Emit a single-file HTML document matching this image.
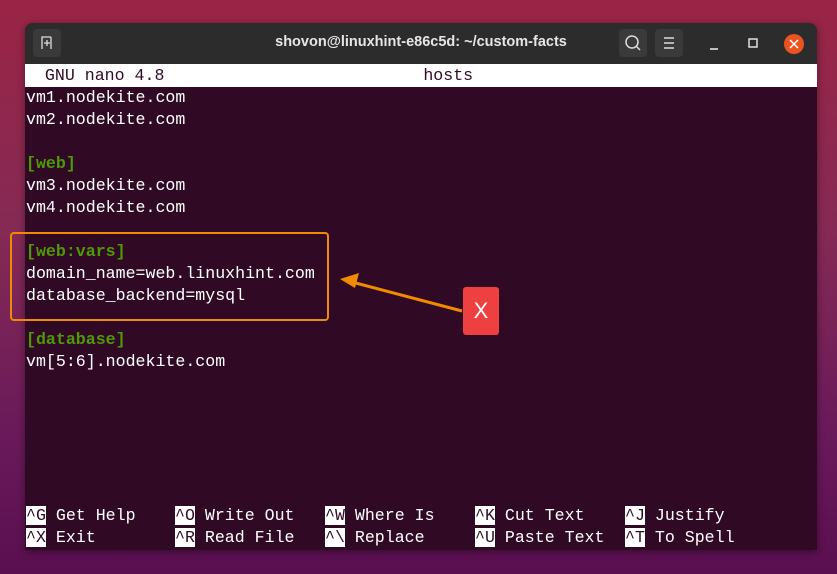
<!DOCTYPE html>
<html><head><style>
html,body{margin:0;padding:0}
body{width:837px;height:574px;overflow:hidden;position:relative;
background:linear-gradient(180deg,#9a2445 0%,#852a55 40%,#6a1a5a 75%,#5a0f50 100%);
font-family:"Liberation Mono",monospace;}
.win{position:absolute;left:25px;top:23px;width:792px;height:527px;background:#300a24;border-radius:8px 8px 0 0;overflow:hidden;box-shadow:0 2px 8px rgba(0,0,0,.4)}
.tb{position:absolute;left:0;top:0;width:792px;height:41px;background:#2c2c2c}
.title{position:absolute;left:0;width:792px;top:11px;text-align:center;color:#e6e6e6;font:bold 14.5px "Liberation Sans",sans-serif}
.btn{position:absolute;top:6px;width:28px;height:28px;background:#3a3a3a;border-radius:4px}
.hdr{position:absolute;left:0;top:41px;width:792px;height:23px;background:#fff;color:#300a24;font-size:16.6px;line-height:23px;white-space:pre}
.t{position:absolute;left:1px;color:#fff;font-size:16.6px;line-height:22px;white-space:pre}
.g{color:#4e9a06;font-weight:bold}
.k{background:#fff;color:#300a24}
</style></head><body>
<div class="win">
 <div class="tb">
  <div class="btn" style="left:8px"><svg width="28" height="28"><path d="M9 20V8h9M14 11v6M11 14h6M18 8v12" stroke="#ddd" stroke-width="1.3" fill="none"/></svg></div>
  <div class="title">shovon@linuxhint-e86c5d: ~/custom-facts</div>
  <div class="btn" style="left:594px"><svg width="28" height="28"><circle cx="13" cy="13" r="6" stroke="#ddd" stroke-width="1.5" fill="none"/><path d="M17 17l4 4" stroke="#ddd" stroke-width="1.5"/></svg></div>
  <div class="btn" style="left:630px"><svg width="28" height="28"><path d="M9 9h10M9 14h10M9 19h10" stroke="#ddd" stroke-width="1.4"/></svg></div>
  <svg style="position:absolute;left:680px;top:10px" width="112" height="24"><path d="M5 16h8" stroke="#eee" stroke-width="1.5"/><rect x="44" y="6" width="8" height="8" stroke="#eee" stroke-width="1.4" fill="none"/><circle cx="89" cy="11" r="10" fill="#e95420"/><path d="M85 7l8 8M93 7l-8 8" stroke="#fff" stroke-width="1.5"/></svg>
 </div>
 <div class="hdr">  GNU nano 4.8                          hosts</div>
 <div class="t" style="top:64px">vm1.nodekite.com
vm2.nodekite.com

<span class="g">[web]</span>
vm3.nodekite.com
vm4.nodekite.com

<span class="g">[web:vars]</span>
domain_name=web.linuxhint.com
database_backend=mysql

<span class="g">[database]</span>
vm[5:6].nodekite.com</div>
 <div class="t" style="top:482px"><span class="k">^G</span> Get Help<br><span class="k">^X</span> Exit</div>
 <div class="t" style="top:482px;left:150px"><span class="k">^O</span> Write Out<br><span class="k">^R</span> Read File</div>
 <div class="t" style="top:482px;left:300px"><span class="k">^W</span> Where Is<br><span class="k">^\</span> Replace</div>
 <div class="t" style="top:482px;left:450px"><span class="k">^K</span> Cut Text<br><span class="k">^U</span> Paste Text</div>
 <div class="t" style="top:482px;left:600px"><span class="k">^J</span> Justify<br><span class="k">^T</span> To Spell</div>
</div>
<div style="position:absolute;left:10px;top:232px;width:315px;height:85px;border:2.5px solid #f08a00;border-radius:4px"></div>
<svg style="position:absolute;left:0;top:0" width="837" height="574"><path d="M462 311L352 282" stroke="#f08a00" stroke-width="3"/><path d="M340 279l19-6-4 15z" fill="#f08a00"/></svg>
<div style="position:absolute;left:463px;top:287px;width:36px;height:48px;background:#ee4040;border-radius:3px;color:#fff;font:22px/48px 'Liberation Sans',sans-serif;text-align:center">X</div>
</body></html>
